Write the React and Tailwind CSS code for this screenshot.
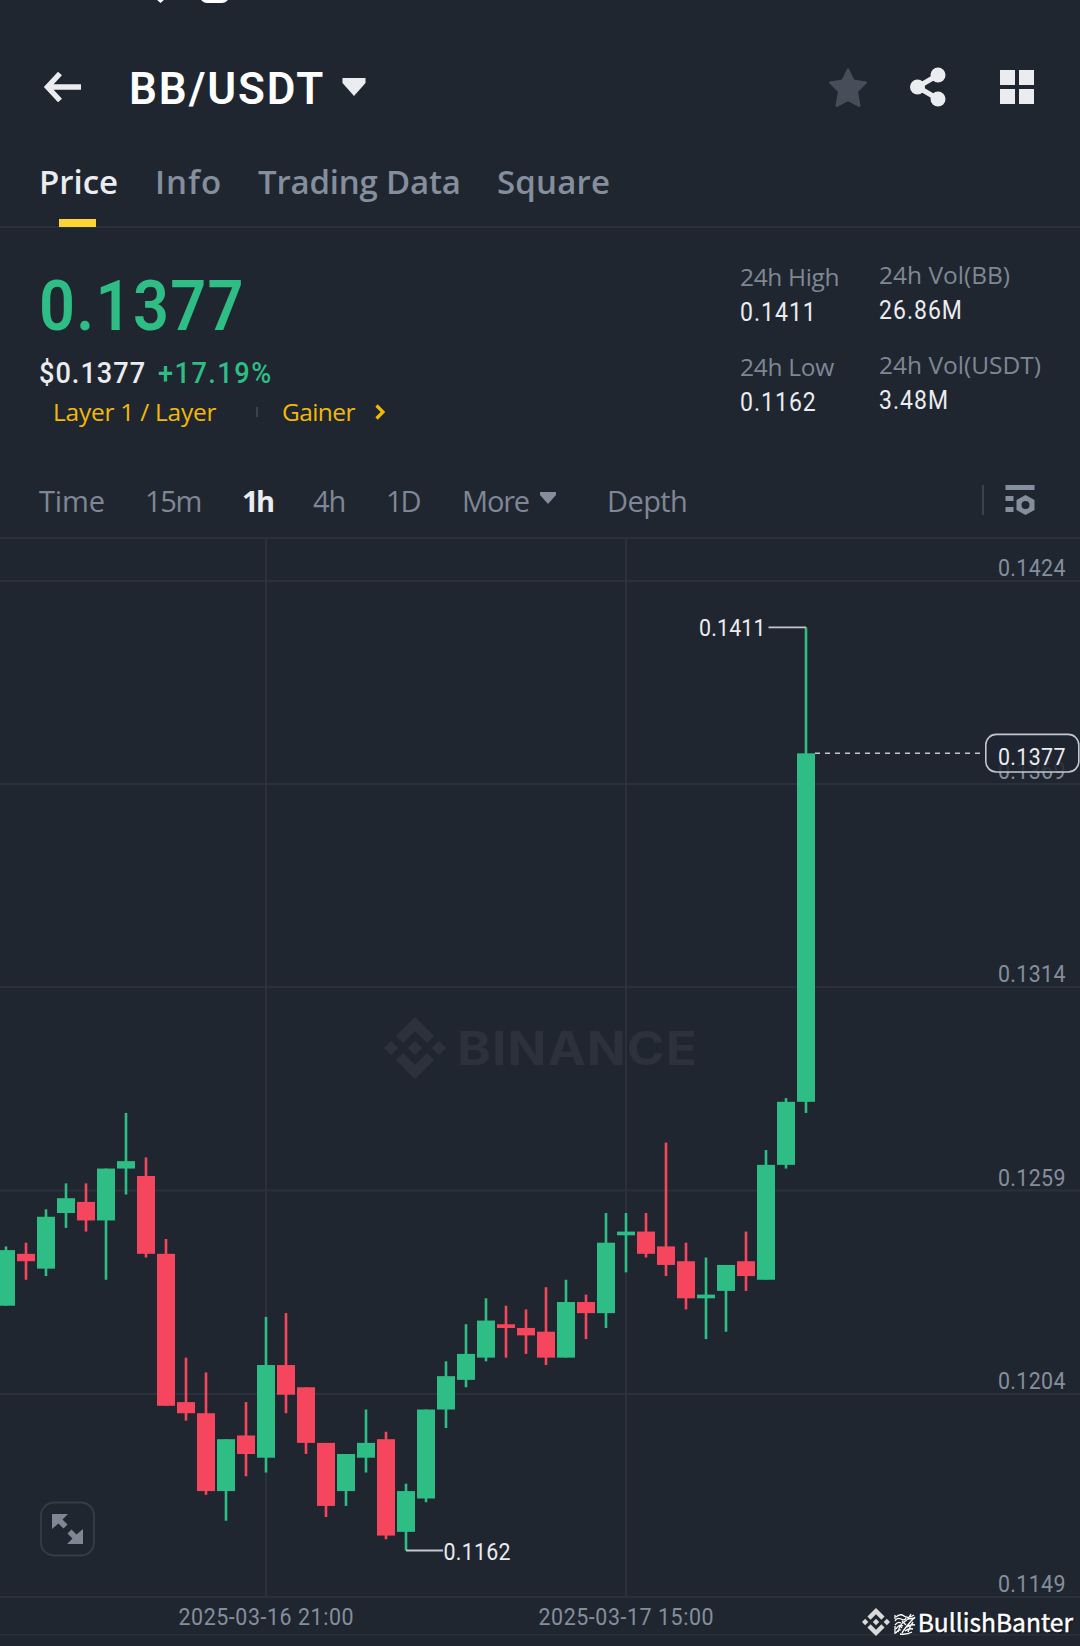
import React from 'react';
import { SiBinance } from 'react-icons/si';

const UP = '#2ebd85';
const DOWN = '#f6465d';

// [open, high, low, close] in 0.0001 USDT ticks
const CANDLES = [
    [1228, 1244, 1228, 1243],
    [1242, 1245, 1235, 1240],
    [1238, 1254, 1236, 1252],
    [1253, 1261, 1249, 1257],
    [1256, 1261, 1248, 1251],
    [1251, 1265, 1235, 1265],
    [1265, 1280, 1258, 1267],
    [1263, 1268, 1241, 1242],
    [1242, 1246, 1201, 1201],
    [1202, 1214, 1197, 1199],
    [1199, 1210, 1177, 1178],
    [1178, 1192, 1170, 1192],
    [1193, 1202, 1182, 1188],
    [1187, 1225, 1183, 1212],
    [1212, 1226, 1199, 1204],
    [1206, 1206, 1188, 1191],
    [1191, 1191, 1171, 1174],
    [1178, 1188, 1174, 1188],
    [1187, 1200, 1183, 1191],
    [1192, 1194, 1165, 1166],
    [1167, 1180, 1162, 1178],
    [1176, 1200, 1175, 1200],
    [1200, 1213, 1195, 1209],
    [1208, 1223, 1206, 1215],
    [1214, 1230, 1213, 1224],
    [1223, 1228, 1214, 1222],
    [1222, 1227, 1215, 1220],
    [1221, 1233, 1212, 1214],
    [1214, 1235, 1214, 1229],
    [1229, 1231, 1219, 1226],
    [1226, 1253, 1222, 1245],
    [1247, 1253, 1237, 1248],
    [1248, 1253, 1241, 1242],
    [1244, 1272, 1236, 1239],
    [1240, 1245, 1227, 1230],
    [1230, 1241, 1219, 1231],
    [1232, 1239, 1221, 1239],
    [1240, 1248, 1232, 1236],
    [1235, 1270, 1235, 1266],
    [1266, 1284, 1265, 1283],
    [1283, 1411, 1280, 1377],
];

const TABS = [
    { label: 'Price', className: 'w-[78px]', active: true },
    { label: 'Info', className: 'w-[65px] tracking-[1px]' },
    { label: 'Trading Data', className: 'w-[201px] tracking-[-0.200px]' },
    { label: 'Square', className: 'w-[114px] tracking-[0.200px]' },
];

const GRID = [
    { label: '0.1424', y: 43 },
    { label: '0.1369', y: 246 },
    { label: '0.1314', y: 449 },
    { label: '0.1259', y: 652.5 },
    { label: '0.1204', y: 856 },
    { label: '0.1149', y: 1059 },
];

const toY = (ticks) => 1012.4 - (ticks - 1162) * 3.7072;

// slightly condensed digits with open tracking
const ChartText = ({ x, y, width, fill = '#848e9c', children }) => (
    <text transform={`translate(${x} ${y}) scale(0.91 1)`} textLength={width / 0.91} lengthAdjust="spacing" fill={fill} fontSize="23.5">
        {children}
    </text>
);

const StatusBar = () => (
    <svg className="block h-10 w-full" viewBox="0 0 1080 40" fill="#fff">
        <path d="M156 -1h9l-4.500 4z" />
        <path d="M200 -5h29v1a7 7 0 0 1-7 7h-15a7 7 0 0 1-7-7z" />
    </svg>
);

const Header = () => (
    <header className="flex h-[94px] items-center pl-[43px] pr-[46px]">
        <svg className="h-[34px] w-[38px]" viewBox="0 0 38 34" fill="none" stroke="#eaecef" strokeWidth="5.400">
            <path d="M38 17H5M17 3.500L4.500 17L17 30.500" />
        </svg>
        <h1 className="ml-[48px] mt-[4px] w-[194px] whitespace-nowrap font-[Roboto] text-[44px] font-semibold leading-none tracking-[1.900px] text-white">BB/USDT</h1>
        <svg className="ml-[19px] mt-[-1px] h-[18px] w-[24px]" viewBox="0 0 24 18" fill="#eaecef">
            <path d="M0.500 0h23v5L12 18L0.500 5z" />
        </svg>
        <div className="ml-auto flex items-center">
            <svg className="h-[40px] w-[38px]" viewBox="0 0 38 40" fill="#474d59" stroke="#474d59" strokeWidth="2" strokeLinejoin="round">
                <path d="M19 2.500L24.500 13.500L37 15.500L28 24.500L30.500 39L19 33L7.500 39L10 24.500L1 15.500L13.500 13.500z" />
            </svg>
            <svg className="ml-[42px] h-[40px] w-[38px]" viewBox="0 0 38 40" fill="#eaecef">
                <path d="M29 8L8.500 20L29 32" fill="none" stroke="#eaecef" strokeWidth="5" />
                <circle cx="29" cy="8" r="7.500" />
                <circle cx="8.500" cy="20" r="7.500" />
                <circle cx="29" cy="32" r="7.500" />
            </svg>
            <div className="ml-[53px] grid grid-cols-2 gap-[4px]">
                <span className="size-[15px] bg-[#eaecef]" />
                <span className="size-[15px] bg-[#eaecef]" />
                <span className="size-[15px] bg-[#eaecef]" />
                <span className="size-[15px] bg-[#eaecef]" />
            </div>
        </div>
    </header>
);

const Tabs = () => (
    <nav className="flex h-[94px] gap-[38px] border-b-2 border-[#2b303b] pl-[39px] text-[33px] font-semibold">
        {TABS.map((tab) => (
            <div key={tab.label} className={`flex flex-col items-center justify-end ${tab.className}`}>
                <span className={`mb-[15px] w-full whitespace-nowrap leading-[44px] ${tab.active ? 'text-[#eaecef]' : 'text-[#848e9c]'}`}>
                    {tab.label}
                </span>
                <span className={`mb-[-1px] mr-[2px] h-[8px] w-[37px] ${tab.active ? 'bg-[#fcd535]' : ''}`} />
            </div>
        ))}
    </nav>
);

const Stat = ({ label, value, className = '' }) => (
    <div className="h-[90px] whitespace-nowrap">
        <div className={`text-[24.500px] leading-[33px] text-[#7f8795] ${className}`}>{label}</div>
        <div className="mt-[2px] origin-left scale-x-92 font-[Roboto] text-[25px] leading-[35px] tracking-[1.100px] text-[#eaecef]">{value}</div>
    </div>
);

const PriceSummary = () => (
    <section className="flex h-[235px] justify-between pl-[39px]">
        <div className="pt-[40px]">
            <div className="origin-left scale-x-90 font-[Roboto] text-[70px] font-semibold leading-[76px] tracking-[1.500px] text-[#2ebd85]">0.1377</div>
            <div className="mt-[9px] flex font-[Roboto] text-[29.500px] font-medium leading-[40px]">
                <span className="w-[119px] origin-left scale-x-92 tracking-[1.100px] text-[#eaecef]">$0.1377</span>
                <span className="origin-left scale-x-92 tracking-[1.600px] text-[#2ebd85]">+17.19%</span>
            </div>
            <div className="ml-[14px] flex items-center text-[24.500px] leading-[38px] tracking-[-0.250px] text-[#f0b90b]">
                <span className="w-[203px]">Layer 1 / Layer</span>
                <span className="h-[10px] w-[2px] bg-[#3b414d]" />
                <span className="ml-[24px] w-[93px] tracking-[-0.600px]">Gainer</span>
                <svg className="h-[16px] w-[10px]" viewBox="0 0 10 16" fill="none" stroke="#f0b90b" strokeWidth="3.200">
                    <path d="M1.500 1.500L8 8L1.500 14.500" />
                </svg>
            </div>
        </div>
        <div className="flex pt-[30px]">
            <div className="mt-[2px] w-[139px]">
                <Stat label="24h High" value="0.1411" className="tracking-[-0.350px]" />
                <Stat label="24h Low" value="0.1162" className="tracking-[-0.300px]" />
            </div>
            <div className="w-[201px]">
                <Stat label="24h Vol(BB)" value="26.86M" />
                <Stat label="24h Vol(USDT)" value="3.48M" />
            </div>
        </div>
    </section>
);

const IntervalBar = () => (
    <div className="flex h-[76px] items-center whitespace-nowrap border-b-2 border-[#2b303b] pl-[39px] pr-[45px] pt-[2px] text-[29px] tracking-[-0.300px] text-[#7f8795]">
        <span className="w-[106px] tracking-[-0.100px]">Time</span>
        <span className="w-[97px] tracking-[-1.300px]">15m</span>
        <span className="w-[71px] font-bold tracking-[-2.500px] text-[#eaecef]">1h</span>
        <span className="w-[73px] tracking-[-1px]">4h</span>
        <span className="w-[76px] tracking-[-2px]">1D</span>
        <span className="w-[78px] tracking-[-1.200px]">More</span>
        <svg className="mt-[-6px] h-[12px] w-[16px]" viewBox="0 0 16 12" fill="#848e9c">
            <path d="M0 0h16v3L8 12L0 3z" />
        </svg>
        <span className="ml-[51px] tracking-[-0.600px]">Depth</span>
        <span className="mt-[-2px] ml-auto h-[30px] w-[2px] bg-[#3b414d]" />
        <svg className="mt-[-2px] ml-[21px] h-[30px] w-[30px]" viewBox="0 0 30 30" fill="#848e9c">
            <path d="M0.500 0h29v5h-29zM0.500 11h8v5h-8zM0.500 22h8v5h-8z" />
            <path fillRule="evenodd" d="M20.500 10l9 5v10l-9 5l-9-5v-10zM20.500 16a4 4 0 1 0 0 8a4 4 0 1 0 0-8z" />
        </svg>
    </div>
);

const CandleChart = () => (
    <svg className="block h-[1107px] w-full font-[Roboto]" viewBox="0 1 1080 1107">
        {/* Grid */}
        <g fill="#2b303b">
            {GRID.map((line) => (
                <rect key={line.label} x="0" y={line.y - 1} width="1080" height="2" />
            ))}
            <rect x="265" y="0" width="2" height="1059" />
            <rect x="625" y="0" width="2" height="1059" />
            <rect x="0" y="1096" width="1080" height="1.500" />
        </g>

        {/* Watermark */}
        <SiBinance x="384" y="479" size="62" color="#2d313c" />
        <text x="457" y="527" textLength="241" lengthAdjust="spacingAndGlyphs" fontSize="47" fontWeight="700" letterSpacing="1" fill="#2d313c" fontFamily="Inter, sans-serif">BINANCE</text>

        {GRID.map((line) => (
            <ChartText key={line.label} x={998} y={line.y - 5} width={67.5}>{line.label}</ChartText>
        ))}

        {/* Candles */}
        {CANDLES.map(([open, high, low, close], i) => {
            const x = 6 + i * 20;
            const top = toY(Math.max(open, close));
            const bottom = toY(Math.min(open, close));
            return (
                <g key={i} fill={close >= open ? UP : DOWN}>
                    <rect x={x - 1.300} y={toY(high)} width="2.600" height={toY(low) - toY(high)} />
                    <rect x={x - 9} y={top} width="18" height={bottom - top} />
                </g>
            );
        })}

        {/* High / low markers */}
        <path d="M768.500 89.300H806M406 1012.500H443" stroke="#c3c6cf" strokeWidth="1.800" />
        <ChartText x={699} y={98.300} width={66.500} fill="#eaecef">0.1411</ChartText>
        <ChartText x={443.5} y={1022} width={67} fill="#eaecef">0.1162</ChartText>

        {/* Last price */}
        <path d="M815 215.300H985" stroke="#c3c6cf" strokeWidth="1.600" strokeDasharray="5 5" />
        <rect x="985.800" y="196.400" width="93" height="37.600" rx="10.500" fill="#202630" fillOpacity="0.850" stroke="#c3c6cf" strokeWidth="1.600" />
        <ChartText x={998} y={227} width={67.5} fill="#eaecef">0.1377</ChartText>

        {/* Fullscreen button */}
        <rect x="41" y="964.500" width="53" height="53" rx="13" fill="#202630" stroke="#363c48" strokeWidth="1.800" />
        <path d="M52 976h16l-5.500 5.500l5 5l-4 4l-5-5l-6.500 5.500zM83 1006h-16l5.500-5.500l-5-5l4-4l5 5l6.500-5.500z" fill="#7f8795" />

        <ChartText x={178.500} y={1087} width={175}>2025-03-16 21:00</ChartText>
        <ChartText x={538.500} y={1087} width={175}>2025-03-17 15:00</ChartText>
    </svg>
);

const AuthorTag = () => (
    <div className="absolute bottom-[1px] right-[7px] flex h-[46px] items-center">
        <SiBinance size={28} color="#d9d9d9" />
        <svg className="ml-[4px] mt-[4px] h-[22px] w-[22px]" viewBox="0 0 22 22" fill="none" stroke="#fff" strokeWidth="1.300">
            <path d="M2 4Q6 0 10 3T20 2M1 8Q3 4 7 6T12 5M14 6L21 5M1 12Q4 8 7 10M2 16Q5 11 9 13M13 14Q17 11 21 12M2 20Q4 16 7 17M11 18Q15 15 19 16M6 21Q13 22 18 19M17 1Q14 7 10 9T4 19M21 4Q17 8 13 13T8 20M19 9Q16 13 14 19M1 2V6M1 13V21M8 8L12 12M5 12L8 15" />
        </svg>
        <span className="ml-[2px] mb-[2px] font-['Noto_Sans_CJK_SC',sans-serif] text-[24.600px] leading-none text-white [-webkit-text-stroke:0.400px_#fff] [text-shadow:1px_1px_2px_rgba(0,0,0,0.600)]">BullishBanter</span>
    </div>
);

const App = () => {
    return (
        <div className="relative h-[1646px] w-[1080px] overflow-hidden bg-[#202630] font-['Open_Sans',sans-serif]">
            <StatusBar />
            <Header />
            <Tabs />
            <PriceSummary />
            <IntervalBar />
            <CandleChart />
            <AuthorTag />
        </div>
    );
};

export default App;
